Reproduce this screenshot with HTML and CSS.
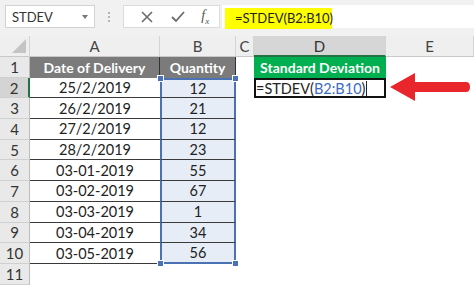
FILE: index.html
```html
<!DOCTYPE html>
<html lang="en">
<head>
  <meta charset="UTF-8">
  <title>STDEV</title>
  <link rel="stylesheet" href="styles.css">
</head>
<body>
<div class="toolbar">
  <div class="namebox">STDEV<span class="caret"></span></div>
  <div class="grip"><i></i><i></i><i></i></div>
  <div class="fbtns">
    <svg width="14" height="14" viewBox="0 0 14 14"><path d="M2 2 L12 12 M12 2 L2 12" stroke="#6b6b6b" stroke-width="1.6" fill="none"/></svg>
    <svg width="16" height="14" viewBox="0 0 16 14"><path d="M2 7 L6 11 L14 2" stroke="#6b6b6b" stroke-width="1.8" fill="none"/></svg>
    <span class="fx">f<sub>x</sub></span>
  </div>
  <div class="fbar"><span class="fhl">=STDEV(B2:B10)</span></div>
</div>

<div class="sheet">
  <!-- column headers -->
  <div class="ch corner"><span class="tri"></span></div>
  <div class="ch">A</div>
  <div class="ch">B</div>
  <div class="ch">C</div>
  <div class="ch active">D</div>
  <div class="ch">E</div>

  <!-- row 1 -->
  <div class="rh">1</div>
  <div class="c head">Date of Delivery</div>
  <div class="c head">Quantity</div>
  <div class="c"></div>
  <div class="c green">Standard Deviation</div>
  <div class="c"></div>

  <div class="rh active">2</div>
  <div class="c date">25/2/2019</div>
  <div class="c qty top">12<span class="hd tl"></span><span class="hd tr"></span></div>
  <div class="c"></div>
  <div class="c edit">=STDEV(<span class="ref">B2:B10</span>)<span class="cursor"></span></div>
  <div class="c"></div>

  <div class="rh">3</div>
  <div class="c date">26/2/2019</div>
  <div class="c qty">21</div>
  <div class="c"></div><div class="c"></div><div class="c"></div>

  <div class="rh">4</div>
  <div class="c date">27/2/2019</div>
  <div class="c qty">12</div>
  <div class="c"></div><div class="c"></div><div class="c"></div>

  <div class="rh">5</div>
  <div class="c date">28/2/2019</div>
  <div class="c qty">23</div>
  <div class="c"></div><div class="c"></div><div class="c"></div>

  <div class="rh">6</div>
  <div class="c date">03-01-2019</div>
  <div class="c qty">55</div>
  <div class="c"></div><div class="c"></div><div class="c"></div>

  <div class="rh">7</div>
  <div class="c date">03-02-2019</div>
  <div class="c qty">67</div>
  <div class="c"></div><div class="c"></div><div class="c"></div>

  <div class="rh">8</div>
  <div class="c date">03-03-2019</div>
  <div class="c qty">1</div>
  <div class="c"></div><div class="c"></div><div class="c"></div>

  <div class="rh">9</div>
  <div class="c date">03-04-2019</div>
  <div class="c qty">34</div>
  <div class="c"></div><div class="c"></div><div class="c"></div>

  <div class="rh">10</div>
  <div class="c date">03-05-2019</div>
  <div class="c qty bottom">56<span class="hd bl"></span><span class="hd br"></span></div>
  <div class="c"></div><div class="c"></div><div class="c"></div>

  <div class="rh">11</div>
  <div class="c"></div><div class="c"></div><div class="c"></div><div class="c"></div><div class="c"></div>

  <svg class="arrow" width="84" height="32" viewBox="0 0 84 32">
    <path d="M2 15 L27 1 L27 10 L78 10 Q82 10 82 15 Q82 20 78 20 L27 20 L27 29 Z" fill="#e8262b"/>
  </svg>
</div>
</body>
</html>
```

FILE: styles.css
```css
body { margin: 0; background: #fff; font-family: Lato, "Open Sans", sans-serif; }

.toolbar {
  height: 36px;
  background: #f1f1f1;
  display: flex;
  align-items: flex-start;
  padding: 5px 0 0 5px;
  box-sizing: border-box;
}
.namebox {
  width: 90px; height: 23px;
  box-sizing: border-box;
  background: #fff;
  border: 1px solid #d2d2d2;
  font-size: 13px; color: #333;
  padding: 3px 0 0 6px;
  position: relative;
}
.caret {
  position: absolute; right: 6px; top: 9px;
  border-left: 3px solid transparent;
  border-right: 3px solid transparent;
  border-top: 4px solid #777;
}
.grip {
  width: 28px; height: 23px;
  display: flex; flex-direction: column; align-items: center; justify-content: center; gap: 2px;
}
.grip i { width: 2px; height: 2px; background: #b5b5b5; display: block; }
.fbtns {
  width: 97px; height: 23px;
  box-sizing: border-box;
  background: #fff;
  border: 1px solid #dcdcdc;
  display: flex; align-items: center; justify-content: space-around;
  padding: 0 2px 0 8px;
}
.fx { font-family: "Liberation Serif", serif; font-style: italic; font-size: 14px; color: #555; }
.fx sub { font-size: 9px; }
.fbar {
  flex: 1; height: 23px; margin-left: 2px;
  background: #fff;
  padding: 2px 0 0 3px;
  box-sizing: border-box;
}
.fhl {
  display: inline-block;
  height: 21px; width: 107px;
  box-sizing: border-box;
  background: #ffff00;
  padding: 2px 0 0 10px;
  font-size: 13px; color: #222;
}

.sheet {
  position: relative;
  display: grid;
  grid-template-columns: 30px 130px 76px 18px 132px 1fr;
  grid-template-rows: 21px repeat(11, 20.7px);
  font-size: 14.5px;
  color: #222;
}
.ch {
  background: #efefef;
  border-right: 1px solid #d4d4d4;
  border-bottom: 1px solid #c8c8c8;
  display: flex; align-items: center; justify-content: center;
  font-size: 15px; color: #444;
  box-sizing: border-box;
}
.ch.active { background: #d6d6d6; border-bottom: 2px solid #217346; color: #333; }
.corner { position: relative; }
.tri {
  position: absolute; right: 3px; bottom: 3px;
  border-left: 14px solid transparent;
  border-bottom: 14px solid #c4c4c4;
}
.rh {
  background: #e9e9e9;
  border-bottom: 1px solid #d0d0d0;
  border-right: 1px solid #bdbdbd;
  display: flex; align-items: center; justify-content: center;
  font-size: 15px; color: #333;
  box-sizing: border-box;
}
.rh.active { background: #d4d4d4; border-right: 2px solid #217346; }

.c {
  box-sizing: border-box;
  display: flex; align-items: center; justify-content: center;
  white-space: nowrap;
  position: relative;
}
.head {
  background: #7b7b7b;
  color: #fff; font-weight: bold; font-size: 14px;
  border-right: 1px solid #333;
}
.green {
  background: #00b050;
  color: #fff; font-weight: bold; font-size: 14px;
}
.date { border-bottom: 1px solid #3a3a3a; }
.qty {
  background: #e6edf7;
  border-left: 2px solid #4a72b5;
  border-right: 2px solid #4a72b5;
  border-bottom: 1px solid #3a3a3a;
}
.qty.top { border-top: 2px solid #4a72b5; }
.qty.bottom { border-bottom: 2px solid #4a72b5; }
.hd {
  position: absolute;
  width: 5px; height: 5px;
  background: #4a72b5;
  border: 1px solid #fff;
}
.hd.tl { left: -5px; top: -5px; }
.hd.tr { right: -5px; top: -5px; }
.hd.bl { left: -5px; bottom: -5px; }
.hd.br { right: -5px; bottom: -5px; }

.edit {
  justify-content: flex-start;
  border: 2px solid #111;
  padding-left: 0;
  font-size: 14.5px;
}
.ref { color: #3d6bc2; }
.cursor { width: 1px; height: 15px; background: #222; margin-left: 1px; }

.arrow { position: absolute; left: 388px; top: 36px; }
```
